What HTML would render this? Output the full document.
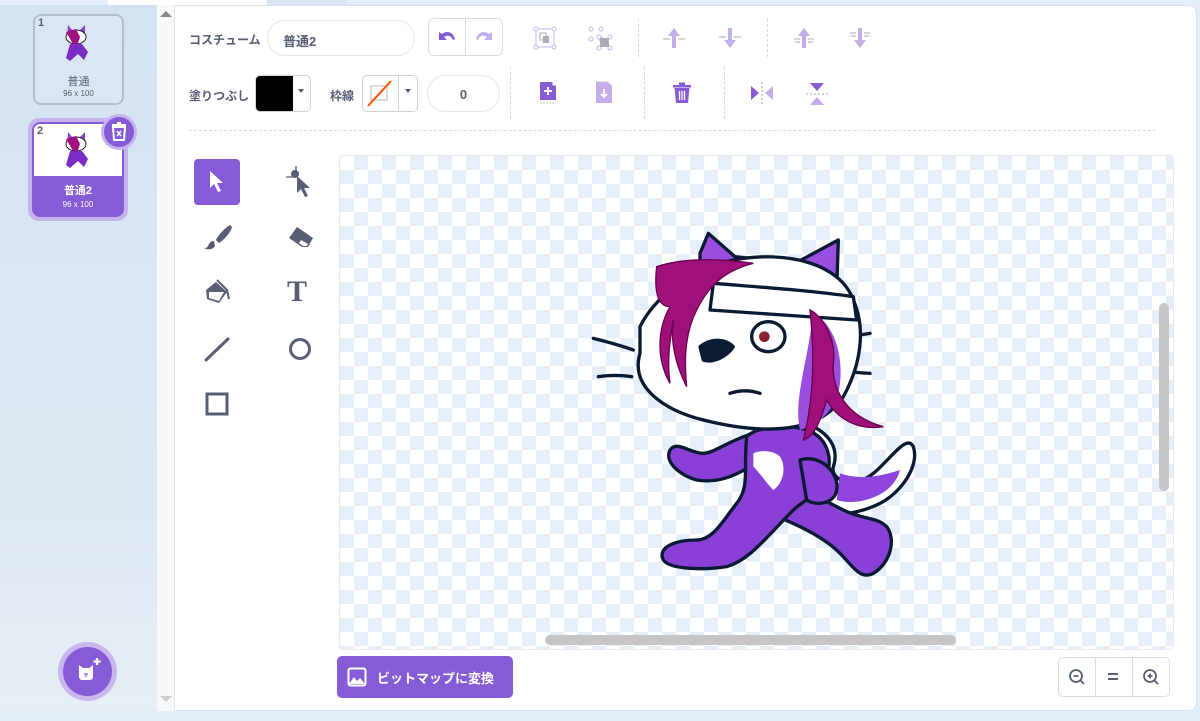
<!DOCTYPE html>
<html><head><meta charset="utf-8"><style>
*{box-sizing:border-box;margin:0;padding:0}
body{width:1200px;height:721px;background:#e3eefa;font-family:"Liberation Sans","Noto Sans CJK JP",sans-serif;position:relative;overflow:hidden;color:#575e75}
.abs{position:absolute}
.side{left:0;top:5px;width:157px;height:706px;background:linear-gradient(#d4e3f2,#dde8f4 70%,#e8eef5)}
.sb{left:157px;top:5px;width:18px;height:706px;background:#f7f8fa;border-right:1px solid #dfe5ec}
.panel{left:175px;top:5px;width:1022px;height:706px;background:#fff;border:1px solid #d9e2ee;border-left:none;border-radius:0 8px 8px 0}
.lbl{font-size:12px;font-weight:bold;color:#575e75}
.inp{border:1px solid #e3e8ef;border-radius:20px;background:#fff;font-size:13px;font-weight:bold;color:#575e75}
.dash{border-left:1px dashed #d6dbe3}
.check{left:339px;top:155px;width:835px;height:495px;border:1px solid #e3eaf3;border-radius:4px;
background-color:#fff;background-image:linear-gradient(45deg,#e6eff9 25%,transparent 25%,transparent 75%,#e6eff9 75%),linear-gradient(45deg,#e6eff9 25%,transparent 25%,transparent 75%,#e6eff9 75%);background-size:28px 28px;background-position:0 0,14px 14px}
</style></head><body>
<div class="abs" style="left:108px;top:0;width:160px;height:5px;background:#fff"></div>
<div class="abs" style="left:267px;top:0;width:80px;height:5px;background:#dbe6f3"></div>
<div class="abs side"></div>
<div class="abs sb"><div class="abs" style="left:3px;top:6px;width:0;height:0;border:6px solid transparent;border-bottom:6px solid #888;border-top:none"></div><div class="abs" style="left:3px;top:691px;width:0;height:0;border:6px solid transparent;border-top:6px solid #ccc;border-bottom:none"></div></div>

<!-- costume 1 -->
<div class="abs" style="left:33px;top:14px;width:91px;height:91px;border:2px solid #b5bfcc;border-radius:8px;background:#dae6f3"></div>
<div class="abs" style="left:38px;top:17px;font-size:11px;font-weight:bold">1</div>
<svg class="abs" style="left:60px;top:22px" width="34" height="40" viewBox="0 0 34 40"><path d="M8 3l4 5h8l5-5v9l-4 8-8 1-6-5z" fill="#8a3fd1"/><ellipse cx="16" cy="15" rx="10" ry="7" fill="#fff" stroke="#222"/><path d="M6 10l10-3 4 8-4 12z" fill="#a01080"/><path d="M10 22l12 0 6 8-4 8-6-6-8 7-4-3z" fill="#7a2cc5"/></svg>
<div class="abs" style="left:33px;top:73px;width:91px;text-align:center;font-size:11px;color:#575e75">普通</div>
<div class="abs" style="left:33px;top:89px;width:91px;text-align:center;font-size:8px">96 x 100</div>

<!-- costume 2 -->
<div class="abs" style="left:28px;top:118px;width:100px;height:103px;border-radius:11px;background:#c7b3ee"></div>
<div class="abs" style="left:32px;top:122px;width:92px;height:95px;border:2px solid #855cd6;border-radius:8px;background:#855cd6;overflow:hidden"><div style="background:#fff;height:52px"></div></div>
<div class="abs" style="left:37px;top:125px;font-size:11px;font-weight:bold">2</div>
<svg class="abs" style="left:60px;top:128px" width="34" height="42" viewBox="0 0 34 40"><path d="M8 3l4 5h8l5-5v9l-4 8-8 1-6-5z" fill="#8a3fd1"/><ellipse cx="16" cy="15" rx="10" ry="7" fill="#fff" stroke="#222"/><path d="M6 10l10-3 4 8-4 12z" fill="#a01080"/><path d="M10 22l12 0 6 8-4 8-6-6-8 7-4-3z" fill="#7a2cc5"/></svg>
<div class="abs" style="left:32px;top:182px;width:92px;text-align:center;font-size:11px;color:#fff;font-weight:bold">普通2</div>
<div class="abs" style="left:32px;top:200px;width:92px;text-align:center;font-size:8px;color:#fff">96 x 100</div>
<div class="abs" style="left:101px;top:114px;width:36px;height:36px;border-radius:50%;background:#c7b3ee"></div>
<div class="abs" style="left:104px;top:117px;width:30px;height:30px;border-radius:50%;background:#855cd6"></div>
<svg class="abs" style="left:110px;top:122px" width="18" height="20" viewBox="0 0 18 20"><rect x="2" y="2" width="14" height="2" fill="#fff"/><rect x="7" y="0" width="4" height="3" fill="#fff"/><path d="M3 5h12l-1 13H4z" fill="none" stroke="#fff" stroke-width="2"/><path d="M7 9l4 5M11 9l-4 5" stroke="#fff" stroke-width="1.5"/></svg>

<!-- add costume -->
<div class="abs" style="left:58px;top:642px;width:59px;height:59px;border-radius:50%;background:#c9b7ee"></div>
<div class="abs" style="left:63px;top:647px;width:49px;height:49px;border-radius:50%;background:#855cd6"></div>
<svg class="abs" style="left:76px;top:657px" width="26" height="26" viewBox="0 0 26 26"><path d="M3 8l4 3h6l4-3v12a3 3 0 0 1-3 3H6a3 3 0 0 1-3-3z" fill="#fff"/><path d="M8 17h4M9 19h2" stroke="#855cd6" stroke-width="1.3"/><path d="M21 1v7M17.5 4.5h7" stroke="#fff" stroke-width="2.2"/></svg>

<div class="abs panel"></div>

<!-- top row -->
<div class="abs lbl" style="left:189px;top:31px">コスチューム</div>
<div class="abs inp" style="left:267px;top:20px;width:148px;height:36px;padding:10px 15px">普通2</div>
<div class="abs" style="left:428px;top:18px;width:75px;height:38px;border:1px solid #d6dde6;border-radius:6px;background:#fff"></div>
<div class="abs" style="left:465px;top:18px;width:1px;height:38px;background:#d6dde6"></div>
<svg class="abs" style="left:437px;top:29px" width="20" height="16" viewBox="0 0 20 16"><path d="M2 3v8h8L7 8c3-2 7-2 9 3l2-1C16 3 10 1 5 5z" fill="#855cd6"/></svg>
<svg class="abs" style="left:474px;top:29px" width="20" height="16" viewBox="0 0 20 16"><path d="M18 3v8h-8l3-3c-3-2-7-2-9 3l-2-1C4 3 10 1 15 5z" fill="#c3aeea"/></svg>
<!-- group icons -->
<svg class="abs" style="left:533px;top:26px" width="24" height="24" viewBox="0 0 24 24"><rect x="3" y="3" width="18" height="18" fill="none" stroke="#c9b5ef"/><g fill="#fff" stroke="#c9b5ef"><circle cx="3" cy="3" r="2"/><circle cx="21" cy="3" r="2"/><circle cx="3" cy="21" r="2"/><circle cx="21" cy="21" r="2"/></g><rect x="7" y="7" width="6" height="7" fill="none" stroke="#aaa"/><rect x="10" y="10" width="6" height="7" fill="#a8adb5"/></svg>
<svg class="abs" style="left:588px;top:26px" width="26" height="26" viewBox="0 0 26 26"><g fill="#fff" stroke="#c9b5ef"><circle cx="3" cy="3" r="2"/><circle cx="13" cy="3" r="2"/><circle cx="3" cy="13" r="2"/><circle cx="13" cy="13" r="2"/><circle cx="11" cy="11" r="2"/><circle cx="22" cy="11" r="2"/><circle cx="11" cy="22" r="2"/><circle cx="22" cy="22" r="2"/></g><rect x="12" y="12" width="9" height="9" fill="#a8adb5"/></svg>
<div class="abs dash" style="left:638px;top:19px;height:38px"></div>
<svg class="abs" style="left:662px;top:27px" width="24" height="22" viewBox="0 0 24 22"><path d="M12 1l6 8h-4v12h-4V9H6z" fill="#c3aeea"/><path d="M1 12h7M16 12h7" stroke="#a8adb5"/></svg>
<svg class="abs" style="left:718px;top:27px" width="24" height="22" viewBox="0 0 24 22"><path d="M12 21l6-8h-4V1h-4v12H6z" fill="#c3aeea"/><path d="M1 10h7M16 10h7" stroke="#a8adb5"/></svg>
<div class="abs dash" style="left:767px;top:19px;height:38px"></div>
<svg class="abs" style="left:792px;top:27px" width="24" height="22" viewBox="0 0 24 22"><path d="M12 1l6 8h-4v12h-4V9H6z" fill="#c3aeea"/><path d="M2 12h6M16 12h6M3 15h5M16 15h5" stroke="#a8adb5"/></svg>
<svg class="abs" style="left:848px;top:27px" width="24" height="22" viewBox="0 0 24 22"><path d="M12 21l6-8h-4V1h-4v12H6z" fill="#c3aeea"/><path d="M2 6h6M16 6h6M3 9h5M16 9h5" stroke="#a8adb5"/></svg>

<!-- second row -->
<div class="abs lbl" style="left:189px;top:87px">塗りつぶし</div>
<div class="abs" style="left:255px;top:75px;width:56px;height:37px;border:1px solid #ccd3dc;border-radius:5px;overflow:hidden;background:#fff"><div style="width:37px;height:100%;background:#000"></div></div>
<div class="abs" style="left:298px;top:89px;border:3px solid transparent;border-top:4px solid #575e75"></div>
<div class="abs lbl" style="left:330px;top:87px">枠線</div>
<div class="abs" style="left:362px;top:75px;width:56px;height:37px;border:1px solid #ccd3dc;border-radius:5px;background:#fff"><div class="abs" style="left:35px;top:0;width:1px;height:100%;background:#ccd3dc"></div></div>
<svg class="abs" style="left:366px;top:79px" width="28" height="30" viewBox="0 0 28 30"><rect x="5" y="7" width="16" height="14" fill="none" stroke="#bbb"/><path d="M2 27L25 2" stroke="#ff5500" stroke-width="2"/></svg>
<div class="abs" style="left:405px;top:89px;border:3px solid transparent;border-top:4px solid #575e75"></div>
<div class="abs inp" style="left:427px;top:75px;width:73px;height:37px;text-align:center;padding-top:11px">0</div>
<div class="abs dash" style="left:510px;top:67px;height:52px"></div>
<svg class="abs" style="left:537px;top:81px" width="22" height="24" viewBox="0 0 22 24"><path d="M3 1h12l4 4v14H3z" fill="#855cd6"/><path d="M15 1v4h4" fill="#fff" stroke="#855cd6"/><path d="M11 6v8M7 10h8" stroke="#fff" stroke-width="2"/><path d="M3 22h16" stroke="#bbb" stroke-dasharray="2 1"/></svg>
<svg class="abs" style="left:593px;top:81px" width="22" height="24" viewBox="0 0 22 24"><path d="M3 1h12l4 4v17H3z" fill="#c3aeea"/><path d="M11 8v8M8 13l3 3 3-3" stroke="#fff" stroke-width="1.8" fill="none"/><path d="M3 1h12" stroke="#bbb" stroke-dasharray="2 1"/></svg>
<div class="abs dash" style="left:644px;top:67px;height:52px"></div>
<svg class="abs" style="left:672px;top:82px" width="20" height="22" viewBox="0 0 20 22"><rect x="1" y="3" width="18" height="2.5" fill="#855cd6"/><rect x="7" y="0.5" width="6" height="3" fill="#855cd6"/><path d="M2.5 6h15l-1.5 15H4z" fill="#855cd6"/><path d="M7.5 9v9M10 9v9M12.5 9v9" stroke="#fff" stroke-width="1.3"/></svg>
<div class="abs dash" style="left:724px;top:67px;height:52px"></div>
<svg class="abs" style="left:749px;top:81px" width="26" height="24" viewBox="0 0 26 24"><path d="M2 5l8 7-8 7z" fill="#855cd6"/><path d="M24 5l-8 7 8 7z" fill="#c3aeea"/><path d="M13 1v22" stroke="#aaa" stroke-dasharray="2 2"/></svg>
<svg class="abs" style="left:805px;top:81px" width="24" height="26" viewBox="0 0 24 26"><path d="M5 2l7 8 7-8z" fill="#855cd6"/><path d="M5 24l7-8 7 8z" fill="#c3aeea"/><path d="M1 13h22" stroke="#aaa" stroke-dasharray="2 2"/></svg>
<div class="abs" style="left:189px;top:130px;width:967px;border-top:1px dashed #d6dbe3"></div>

<!-- tools -->
<div class="abs" style="left:194px;top:159px;width:46px;height:46px;border-radius:4px;background:#855cd6"></div>
<svg class="abs" style="left:207px;top:170px" width="20" height="24" viewBox="0 0 20 24"><path d="M3 1v17l4-4 4 8 3-1-4-8h6z" fill="#fff"/></svg>
<svg class="abs" style="left:285px;top:166px" width="30" height="32" viewBox="0 0 30 32"><path d="M12 10v17l4-4 4 8 3-1-4-8h6z" fill="#575e75"/><circle cx="10" cy="8" r="4" fill="#575e75"/><path d="M1 11h7M11 0v5" stroke="#575e75" stroke-width="1.3"/></svg>
<svg class="abs" style="left:202px;top:223px" width="32" height="28" viewBox="0 0 32 28"><path d="M28 2c-4 2-12 10-14 15l3 3c5-3 12-11 13-16z" fill="#575e75"/><path d="M12 18c-4 0-5 3-6 5-1 2-3 2-4 2 3 2 9 2 11-2z" fill="#575e75"/></svg>
<svg class="abs" style="left:286px;top:225px" width="30" height="26" viewBox="0 0 30 26"><path d="M11 2l16 11-5 9-6 0L3 13z" fill="#575e75"/><path d="M15 15l7 4-1 2h-4l-4-3z" fill="#fff"/></svg>
<svg class="abs" style="left:203px;top:278px" width="30" height="30" viewBox="0 0 30 30"><path d="M3 12l10-8 11 10-8 11-12-4z" fill="#575e75"/><path d="M6 14l15 0-5 9-10-3z" fill="#fff"/><path d="M14 2l10 10 2 9" stroke="#575e75" stroke-width="2" fill="none"/></svg>
<div class="abs" style="left:287px;top:277px;font:bold 30px 'Liberation Serif',serif;color:#575e75;line-height:30px">T</div>
<svg class="abs" style="left:203px;top:336px" width="28" height="26"><path d="M3 24L25 3" stroke="#575e75" stroke-width="3" stroke-linecap="round"/></svg>
<svg class="abs" style="left:288px;top:337px" width="24" height="24"><circle cx="12" cy="12" r="9.5" fill="none" stroke="#575e75" stroke-width="3"/></svg>
<svg class="abs" style="left:205px;top:392px" width="24" height="24"><rect x="2" y="2" width="20" height="20" fill="none" stroke="#575e75" stroke-width="3"/></svg>

<!-- canvas -->
<div class="abs check"></div>
<svg class="abs" style="left:580px;top:220px" width="360" height="370" viewBox="0 0 1080 1110">
<g stroke="#0a1a33" stroke-width="10" stroke-linejoin="round" stroke-linecap="round">
<path d="M40 355c40 10 80 20 120 35M55 470c30-5 70-5 100 0M780 350c30 0 60-5 90-10M790 455c30 0 60 5 80 5" fill="none"/>
<path d="M700 620c40 20 80 60 60 120-10 40 60 70 120 20 50-40 100-120 120-80 20 60-40 140-100 170-80 40-170 40-200 20z" fill="#fff"/>
<path d="M780 760c60 20 120 10 180-10-20 80-130 110-190 90z" fill="#8e44dd" stroke="none"/>
<path d="M540 700c40 60 150 120 250 170 60 30 100 20 130 50 30 40 10 110-40 140-40 20-60-20-100-60-60-60-160-100-240-130z" fill="#8a3fd6"/>
<path d="M520 640c-70 20-120 60-150 60-40 0-80-40-100-10-20 40 40 80 80 90 60 10 110-10 160-40z" fill="#8a3fd6"/>
<path d="M500 650c30-30 120-40 180-20 60 20 80 80 60 140-20 50-80 80-100 100-80 80-130 150-200 170-60 10-170 10-190-20-20-40 40-60 100-60 50 0 80-60 120-110 40-50 20-100 30-200z" fill="#8a3fd6"/>
<path d="M660 720c60-20 120 40 110 90-5 40-60 50-90 30z" fill="#8a3fd6"/>
<path d="M520 700c20-10 60-10 80 10 20 30 10 80-20 100-20-20-40-50-60-70z" fill="#fff" stroke="none"/>
<path d="M360 100l25-60 80 70 180 20 130-70-5 150-410 20z" fill="#9a4ee0"/>
<path d="M180 320c40-80 140-170 280-200 160-30 320 10 360 120 40 90 20 200-30 290-80 120-260 110-420 70-120-30-220-100-190-200z" fill="#fff"/>
<path d="M700 280c60 30 90 120 80 210-10 80-60 120-120 140-20-90 20-190 40-350z" fill="#9a4ee0" stroke="none"/>
<path d="M400 190c120 10 280 20 420 40l10 70c-140-10-300-20-440-30z" fill="#fff"/>
<path d="M360 380c40-30 80-20 100 0-20 30-60 50-90 40z" fill="#0a1a33"/>
<ellipse cx="565" cy="350" rx="50" ry="45" fill="#fff"/>
<path d="M450 520c30-10 60-10 90 0" fill="none"/>
</g>
<circle cx="553" cy="350" r="16" fill="#8a2030"/>
<g fill="#a0107a" stroke="#6a0050" stroke-width="4">
<path d="M230 140c60-20 150-30 290-10-80 20-130 60-170 140-30 60-40 130-30 230-30-60-50-130-40-200-10 60-20 120-10 190-40-70-40-160 0-230-30 0-50-30-40-120z"/>
<path d="M690 270c40 20 80 90 70 160-5 80 40 160 150 190-60 10-130-10-170-80-20 70-40 110-70 120 20-80 40-200 20-390z"/>
</g>
</svg>
<!-- scrollbars -->
<div class="abs" style="left:1159px;top:303px;width:10px;height:188px;border-radius:5px;background:#c6c6c6"></div>
<div class="abs" style="left:545px;top:635px;width:411px;height:10px;border-radius:5px;background:#c6c6c6"></div>

<!-- bitmap button -->
<div class="abs" style="left:337px;top:656px;width:176px;height:42px;border-radius:5px;background:#855cd6;color:#fff;font-size:13px;font-weight:bold;padding:12px 0 0 40px">ビットマップに変換</div>
<svg class="abs" style="left:347px;top:667px" width="20" height="20" viewBox="0 0 20 20"><rect x="1.5" y="1.5" width="17" height="17" rx="2" fill="none" stroke="#fff" stroke-width="2"/><path d="M2 17l5-7 3 4 3-3 5 6z" fill="#fff"/></svg>

<!-- zoom -->
<div class="abs" style="left:1058px;top:657px;width:112px;height:40px;border:1px solid #d6dde6;border-radius:5px;background:#fff"></div>
<div class="abs" style="left:1095px;top:657px;width:1px;height:40px;background:#d6dde6"></div>
<div class="abs" style="left:1132px;top:657px;width:1px;height:40px;background:#d6dde6"></div>
<svg class="abs" style="left:1067px;top:667px" width="20" height="20"><circle cx="9" cy="9" r="6" fill="none" stroke="#575e75" stroke-width="1.8"/><path d="M13 13l4 4M6.5 9h5" stroke="#575e75" stroke-width="1.8"/></svg>
<svg class="abs" style="left:1104px;top:667px" width="20" height="20"><path d="M4 7h10M4 12h10" stroke="#575e75" stroke-width="2"/></svg>
<svg class="abs" style="left:1141px;top:667px" width="20" height="20"><circle cx="9" cy="9" r="6" fill="none" stroke="#575e75" stroke-width="1.8"/><path d="M13 13l4 4M6.5 9h5M9 6.5v5" stroke="#575e75" stroke-width="1.8"/></svg>
</body></html>
